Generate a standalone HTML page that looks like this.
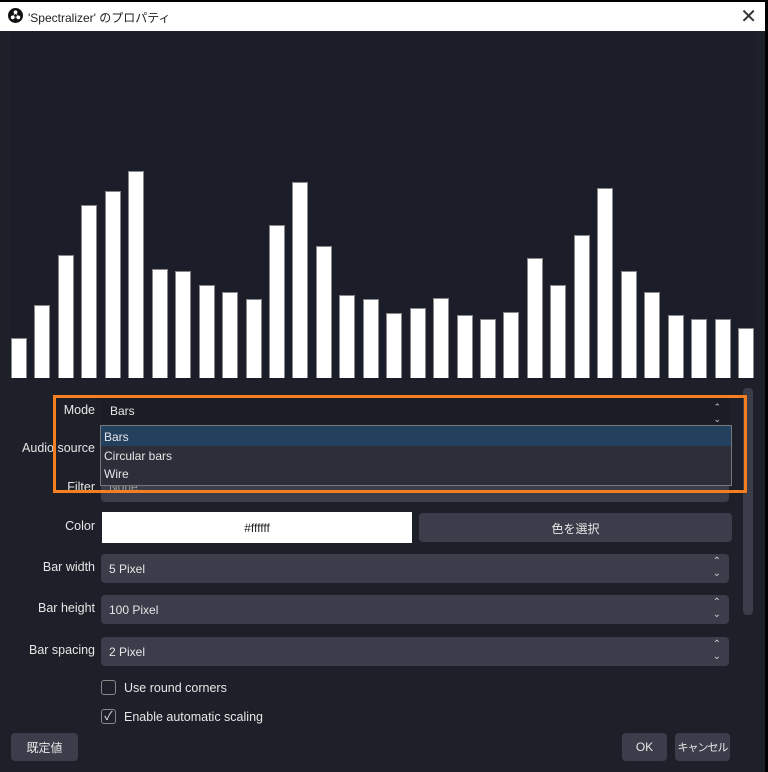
<!DOCTYPE html>
<html><head><meta charset="utf-8"><style>
*{box-sizing:border-box;margin:0;padding:0}
body{width:768px;height:772px;background:#000;position:relative;overflow:hidden;font-family:"Liberation Sans","Noto Sans CJK JP",sans-serif;font-size:12px;color:#e6e6e6}
.win{position:absolute;left:0;top:2px;width:765px;height:770px;background:#1e2029}
.title{position:absolute;left:0;top:0;width:765px;height:29px;background:#fff;color:#222;font-size:12px}
.title .t{position:absolute;left:28px;top:7px}
.title .x{position:absolute;right:8px;top:2px;font-size:20px;color:#333}
.prev{position:absolute;left:10px;top:31px;width:745px;height:349px;background:#1b1d28}
.bar{position:absolute;width:16px;background:#fff;bottom:2px;border:1px solid #888;border-bottom:none}
.lbl{position:absolute;right:673px;text-align:right;white-space:nowrap;font-size:12.5px}
.inp{position:absolute;left:101px;width:628px;height:29px;background:#3b3e4a;border-radius:4px;padding:8px 8px;font-size:12px}
.sp{position:absolute;right:8px;top:2px;font-size:10px;line-height:12px;color:#ccc;text-align:center}
.btn{position:absolute;background:#3b3e4a;border-radius:4px;text-align:center;font-size:12px;white-space:nowrap}
.cb{position:absolute;left:101px;width:15px;height:15px;border:1px solid #888;border-radius:3px}
</style></head><body>
<div class="win">
<div class="title"><svg style="position:absolute;left:8px;top:6px" width="15" height="15" viewBox="0 0 16 16"><circle cx="8" cy="8" r="8" fill="#111"/><circle cx="8" cy="8" r="2" fill="#fff"/><circle cx="8" cy="4.5" r="2" fill="#fff"/><circle cx="5" cy="10" r="2" fill="#fff"/><circle cx="11" cy="10" r="2" fill="#fff"/><circle cx="8" cy="8" r="1.5" fill="#111"/></svg><span class="t">'Spectralizer' のプロパティ</span><span class="x">✕</span></div>
</div>
<div class="prev" id="p"></div>
<div style="position:absolute;left:743px;top:388px;width:10px;height:227px;background:#3b3e4a;border-radius:4px"></div>

<div class="lbl" style="top:403px;right:673px">Mode</div>
<div style="position:absolute;left:101px;top:397px;width:628px;height:27px;background:#1b1d26;padding:7px 9px">Bars<span class="sp" style="top:4px;font-size:9px">⌃<br>⌄</span></div>
<div class="lbl" style="top:441px;right:673px">Audio source</div>
<div class="lbl" style="top:480px;right:673px">Filter</div>
<div class="inp" style="top:476px;height:26px;color:#999;padding-top:4px">None</div>
<div style="position:absolute;left:100px;top:425px;width:632px;height:61px;background:#2c2e3a;border:1px solid #777">
 <div style="height:20px;background:#24405f;padding:4px 3px">Bars</div>
 <div style="height:19px;padding:3px 3px">Circular bars</div>
 <div style="height:19px;padding:2px 3px">Wire</div>
</div>
<div style="position:absolute;left:53px;top:395px;width:694px;height:98px;border:3px solid #f57f20"></div>

<div class="lbl" style="top:519px">Color</div>
<div style="position:absolute;left:102px;top:512px;width:310px;height:31px;background:#fff;color:#222;text-align:center;padding-top:9px">#ffffff</div>
<div class="btn" style="left:419px;top:513px;width:313px;height:29px;padding-top:7px">色を選択</div>

<div class="lbl" style="top:560px">Bar width</div>
<div class="inp" style="top:554px">5 Pixel<span class="sp">⌃<br>⌄</span></div>
<div class="lbl" style="top:601px">Bar height</div>
<div class="inp" style="top:595px">100 Pixel<span class="sp">⌃<br>⌄</span></div>
<div class="lbl" style="top:643px">Bar spacing</div>
<div class="inp" style="top:637px">2 Pixel<span class="sp">⌃<br>⌄</span></div>

<div class="cb" style="top:680px"></div><div style="position:absolute;left:124px;top:681px;font-size:12.5px">Use round corners</div>
<div class="cb" style="top:709px;font-size:12px;line-height:13px;text-align:center">✓</div><div style="position:absolute;left:124px;top:710px;font-size:12.5px">Enable automatic scaling</div>

<div class="btn" style="left:11px;top:733px;width:67px;height:28px;padding-top:6px">既定値</div>
<div class="btn" style="left:622px;top:733px;width:45px;height:28px;padding-top:7px">OK</div>
<div class="btn" style="left:675px;top:733px;width:55px;height:28px;padding-top:6px;font-size:11px;letter-spacing:-1px">キャンセル</div>

<script>
var t=[337,304,254,204,190,170,268,270,284,291,298,224,181,245,294,298,312,307,297,314,318,311,257,284,234,187,270,291,314,318,318,327];
var p=document.getElementById('p'),h='';
for(var i=0;i<32;i++){h+='<div class="bar" style="left:'+(1+i*23.45).toFixed(1)+'px;height:'+(377-t[i])+'px"></div>';}
p.innerHTML=h;
</script>
</body></html>
